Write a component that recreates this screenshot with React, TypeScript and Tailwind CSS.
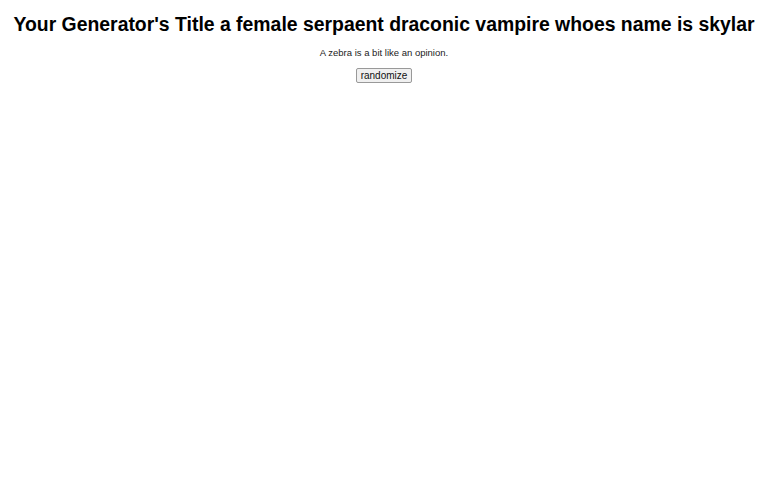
export default function App() {
  return (
    <div className="min-h-screen bg-white text-black text-center" style={{ fontFamily: '"Liberation Sans", Arial, sans-serif' }}>
      <h1 className="pt-[12px] text-[19.4px] font-bold leading-[24px] whitespace-nowrap">
        Your Generator's Title a female serpaent draconic vampire whoes name is skylar
      </h1>
      <p className="mt-[11px] text-[9.5px] leading-[12px] text-[#222]">A zebra is a bit like an opinion.</p>
      <div className="mt-[9px] flex justify-center">
        <button className="h-[15px] px-[4px] text-[10px] leading-[12px] text-[#111] bg-[#f0f0f0] border border-[#999] rounded-[2px]">
          randomize
        </button>
      </div>
    </div>
  );
}
